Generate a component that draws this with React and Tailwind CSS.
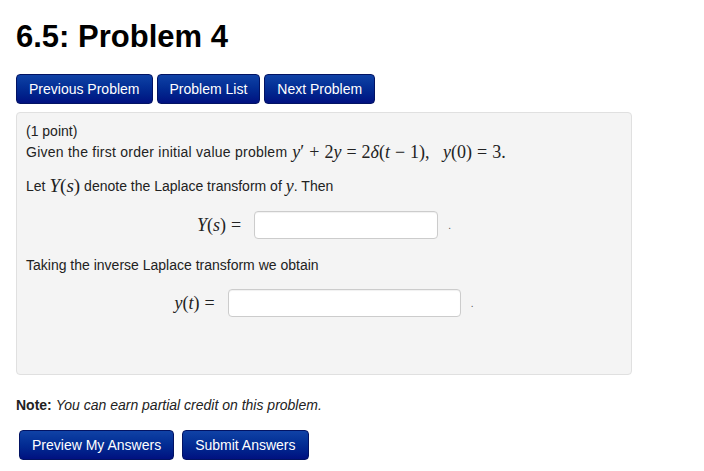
const SANS = { fontFamily: '"Liberation Sans", Arial, sans-serif' };

function NavButton({ children }) {
  return (
    <button className="h-[30px] px-[12px] rounded-[4px] border border-[#021363] bg-linear-to-b from-[#1042a6] to-[#011080] text-[14px] text-white leading-none">
      {children}
    </button>
  );
}

function M({ children, className = "" }) {
  return (
    <span
      className={"text-[18px] " + className}
      style={{ fontFamily: '"Liberation Serif", "Times New Roman", serif' }}
    >
      {children}
    </span>
  );
}

const I = ({ children }) => <span className="italic">{children}</span>;
const Op = ({ children }) => <span className="mx-[5px]">{children}</span>;

function AnswerRow({ label, width }) {
  return (
    <div className="flex h-[28px] items-center justify-center">
      <M className="mr-[8px] text-[#222]">{label}</M>
      <div className={"h-[28px] rounded-[4px] border border-[#ccc] bg-white shadow-[inset_0_1px_1px_rgba(0,0,0,0.06)] " + width} />
      <span className="ml-[10px] text-[10px] text-[#555]">.</span>
    </div>
  );
}

export default function App() {
  return (
    <div className="w-[704px] h-[471px] bg-white px-[16px] text-[#222]" style={SANS}>
      <h1 className="pt-[21px] text-[31px] font-bold leading-none text-black">6.5: Problem 4</h1>

      <div className="mt-[22px] flex gap-[4px]">
        <NavButton>Previous Problem</NavButton>
        <NavButton>Problem List</NavButton>
        <NavButton>Next Problem</NavButton>
      </div>

      <div className="mt-[8px] w-[616px] rounded-[4px] border border-[#e0e0e0] bg-[#f4f4f4] px-[9px] pt-[8px] pb-[57px] text-[14px]">
        <div className="leading-[20px]">(1 point)</div>
        <div className="flex items-center leading-[22px]">
          <span className="tracking-[0.25px]">Given the first order initial value problem</span>
          <M className="ml-[5px] whitespace-pre">
            <I>y</I>′<Op>+</Op>2<I>y</I><Op>=</Op>2<I>δ</I>(<I>t</I><Op>−</Op>1),{"   "}<I>y</I>(0)<Op>=</Op>3.
          </M>
        </div>
        <div className="mt-[12px] flex items-center leading-[22px]">
          <span>Let</span>
          <M className="mx-[4px] text-[19px]">
            <I>Y</I>(<I>s</I>)
          </M>
          <span>denote the Laplace transform of</span>
          <M className="ml-[4px]">
            <I>y</I>
          </M>
          <span>. Then</span>
        </div>

        <div className="mt-[14px]">
          <AnswerRow
            label={
              <span>
                <I>Y</I>(<I>s</I>)<Op>=</Op>
              </span>
            }
            width="w-[184px]"
          />
        </div>

        <div className="mt-[16px] leading-[20px]">Taking the inverse Laplace transform we obtain</div>

        <div className="mt-[14px]">
          <AnswerRow
            label={
              <span>
                <I>y</I>(<I>t</I>)<Op>=</Op>
              </span>
            }
            width="w-[233px]"
          />
        </div>
      </div>

      <p className="mt-[20px] text-[14px] leading-[20px]">
        <span className="font-bold">Note:</span> <span className="italic">You can earn partial credit on this problem.</span>
      </p>

      <div className="ml-[3px] mt-[15px] flex gap-[8px]">
        <NavButton>Preview My Answers</NavButton>
        <NavButton>Submit Answers</NavButton>
      </div>
    </div>
  );
}
